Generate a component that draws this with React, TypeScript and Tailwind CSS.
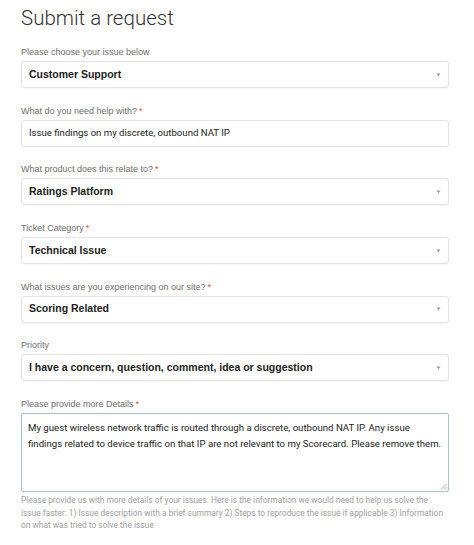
import type { ReactNode } from "react";

const font = { fontFamily: '"Liberation Sans", Arial, sans-serif' };
const roboto = { fontFamily: 'Roboto, "Liberation Sans", sans-serif' };

function Label({ children, required }: { children: ReactNode; required?: boolean }) {
  return (
    <label className="block h-[16px] text-[9px] leading-[16px] text-[#6e6e6e]">
      {children}
      {required && <span className="ml-[2px] text-[#d9463b]">*</span>}
    </label>
  );
}

function Caret() {
  return (
    <svg width="5" height="4" viewBox="0 0 5 4" className="shrink-0">
      <path d="M0.5 0.5h4L2.5 3.2z" fill="#999" />
    </svg>
  );
}

function SelectField({ label, value, required }: { label: string; value: string; required?: boolean }) {
  return (
    <div>
      <Label required={required}>{label}</Label>
      <div className="mt-[1px] flex h-[27px] items-center justify-between rounded-[3px] border border-[#e3e3e3] bg-white pl-[7px] pr-[7px] shadow-[0_1px_1px_rgba(0,0,0,0.03)]">
        <span className="text-[10.5px] font-bold text-[#222]">{value}</span>
        <Caret />
      </div>
    </div>
  );
}

export default function App() {
  return (
    <div className="min-h-[545px] bg-white" style={font}>
      <div className="ml-[21px] w-[428px]">
        <h1 className="pt-[5px] text-[20.5px] font-light leading-[26px] text-[#333]" style={roboto}>
          Submit a request
        </h1>

        <div className="mt-[13px] flex flex-col gap-[14.7px]">
          <SelectField label="Please choose your issue below" value="Customer Support" />

          <div>
            <Label required>What do you need help with?</Label>
            <div className="mt-[1px] flex h-[27px] items-center rounded-[3px] border border-[#e3e3e3] bg-white px-[7px]">
              <span className="text-[9.6px] text-[#222]" style={roboto}>
                Issue findings on my discrete, outbound NAT IP
              </span>
            </div>
          </div>

          <SelectField label="What product does this relate to?" value="Ratings Platform" required />
          <SelectField label="Ticket Category" value="Technical Issue" required />
          <SelectField label="What issues are you experiencing on our site?" value="Scoring Related" required />
          <SelectField label="Priority" value="I have a concern, question, comment, idea or suggestion" />

          <div>
            <Label required>Please provide more Details</Label>
            <div
              className="relative mt-[1px] h-[79px] rounded-[2px] border border-[#a9c2c9] bg-white px-[6px] pt-[6px] text-[9.65px] leading-[15.5px] text-[#222]"
              style={roboto}
            >
              <p className="whitespace-nowrap">
                My guest wireless network traffic is routed through a discrete, outbound NAT IP. Any issue
              </p>
              <p className="whitespace-nowrap">
                findings related to device traffic on that IP are not relevant to my Scorecard. Please remove them.
              </p>
              <svg width="7" height="7" viewBox="0 0 7 7" className="absolute bottom-[1px] right-[1px]">
                <path d="M6.5 1L1 6.5M6.5 4L4 6.5" stroke="#9a9a9a" strokeWidth="0.8" />
              </svg>
            </div>
            <div className="mt-[2px] text-[8.4px] leading-[12.5px] text-[#a0a0a0]" style={roboto}>
              <p className="whitespace-nowrap">
                Please provide us with more details of your issues. Here is the information we would need to help us solve the
              </p>
              <p className="whitespace-nowrap">
                issue faster: 1) Issue description with a brief summary 2) Steps to reproduce the issue if applicable 3) Information
              </p>
              <p className="whitespace-nowrap">on what was tried to solve the issue</p>
            </div>
          </div>
        </div>
      </div>
    </div>
  );
}
